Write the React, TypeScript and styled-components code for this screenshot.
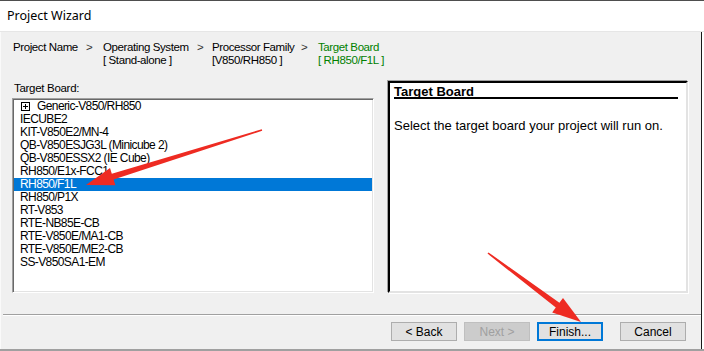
import React from "react";
import styled, { createGlobalStyle } from "styled-components";

const GlobalStyle = createGlobalStyle`
  html, body {
    margin: 0;
    padding: 0;
    background: #ffffff;
    overflow: hidden;
  }
  * {
    box-sizing: border-box;
  }
`;

const steps = [
  { name: "Project Name", value: "" },
  { name: "Operating System", value: "[ Stand-alone ]" },
  { name: "Processor Family", value: "[V850/RH850 ]" },
  { name: "Target Board", value: "[ RH850/F1L ]", current: true },
];

const boards = [
  { name: "Generic-V850/RH850", group: true },
  { name: "IECUBE2" },
  { name: "KIT-V850E2/MN-4" },
  { name: "QB-V850ESJG3L (Minicube 2)" },
  { name: "QB-V850ESSX2 (IE Cube)" },
  { name: "RH850/E1x-FCC1" },
  { name: "RH850/F1L", selected: true },
  { name: "RH850/P1X" },
  { name: "RT-V853" },
  { name: "RTE-NB85E-CB" },
  { name: "RTE-V850E/MA1-CB" },
  { name: "RTE-V850E/ME2-CB" },
  { name: "SS-V850SA1-EM" },
];

export default function App() {
  return (
    <>
      <GlobalStyle />
      <Frame>
        <TitleBar>Project Wizard</TitleBar>
        <Body>
          <Crumbs>
            {steps.map((s, i) => (
              <React.Fragment key={s.name}>
                {i > 0 && <Sep>&gt;</Sep>}
                <Step $current={s.current}>
                  <div>{s.name}</div>
                  <div>{s.value}</div>
                </Step>
              </React.Fragment>
            ))}
          </Crumbs>

          <Main>
            <LeftCol>
              <FieldLabel>Target Board:</FieldLabel>
              <ListBox>
                {boards.map((b) => (
                  <ListRow key={b.name} $selected={b.selected}>
                    {b.group && (
                      <Expander>
                        <svg width="9" height="9" viewBox="0 0 9 9">
                          <rect x="0.5" y="0.5" width="8" height="8" fill="#fff" stroke="#000" />
                          <path d="M2 4.5h5M4.5 2v5" stroke="#000" />
                        </svg>
                      </Expander>
                    )}
                    {b.name}
                  </ListRow>
                ))}
              </ListBox>
            </LeftCol>

            <InfoPanel>
              <InfoTitle>Target Board</InfoTitle>
              <InfoText>Select the target board your project will run on.</InfoText>
            </InfoPanel>
          </Main>

          <Divider />

          <ButtonRow>
            <Button>&lt; Back</Button>
            <Button disabled>Next &gt;</Button>
            <Button $default>Finish...</Button>
            <Button $gap>Cancel</Button>
          </ButtonRow>
        </Body>

        <Arrows width="704" height="351" viewBox="0 0 704 351">
          <polygon
            fill="#ee2b22"
            points="262.2,130.8 113.6,179.6 115.4,185.3 86,185 110,168.1 111.8,173.8 261.8,129.2"
          />
          <polygon
            fill="#ee2b22"
            points="487.5,253.6 555.8,307.6 552.2,312.4 581,322 563,298 559.4,302.8 488.5,252.4"
          />
        </Arrows>
      </Frame>
    </>
  );
}

const Frame = styled.div`
  position: relative;
  width: 704px;
  height: 351px;
  display: flex;
  flex-direction: column;
  font-family: "Liberation Sans", Arial, sans-serif;
  font-size: 11px;
  color: #000;
  border-bottom: 2px solid #a0a0a0;
`;

const TitleBar = styled.div`
  height: 32px;
  flex: none;
  display: flex;
  align-items: center;
  padding: 0 0 1px 7px;
  background: #ffffff;
  border-top: 1px solid #4e4e4e;
  border-bottom: 1px solid #e6e6e6;
  font-family: "Noto Sans", "Liberation Sans", sans-serif;
  font-size: 12.5px;
`;

const Body = styled.div`
  flex: 1;
  width: 702px;
  display: flex;
  flex-direction: column;
  background: #f0f0f0;
  border-left: 1px solid #fafafa;
  border-right: 1px solid #1a1a1a;
`;

const Crumbs = styled.div`
  display: grid;
  grid-template-columns: 73px 17px 94px 15px 89px 17px auto;
  padding: 9px 0 0 12px;
  font-size: 11.5px;
  line-height: 13px;
  letter-spacing: -0.4px;
`;

const Sep = styled.div`
  color: #333;
`;

const Step = styled.div<{ $current?: boolean }>`
  color: ${(p) => (p.$current ? "#008000" : "#000")};
  white-space: nowrap;
`;

const Main = styled.div`
  display: flex;
  gap: 14px;
  height: 212px;
  margin-top: 14px;
  padding-left: 11px;
`;

const LeftCol = styled.div`
  width: 362px;
  display: flex;
  flex-direction: column;
`;

const FieldLabel = styled.div`
  height: 17px;
  padding: 1px 0 0 2px;
  font-size: 11.5px;
  line-height: 13px;
  letter-spacing: -0.3px;
`;

const ListBox = styled.div`
  flex: 1;
  background: #fff;
  border: 1px solid;
  border-color: #a0a0a0 #ffffff #ffffff #a0a0a0;
  box-shadow: inset 1px 1px 0 #696969, inset -1px -1px 0 #e3e3e3;
  padding: 1px 1px 0 1px;
`;

const ListRow = styled.div<{ $selected?: boolean }>`
  height: 13px;
  line-height: 13px;
  display: flex;
  align-items: center;
  padding-left: 6px;
  white-space: nowrap;
  letter-spacing: -0.6px;
  font-size: 12px;
  background: ${(p) => (p.$selected ? "#0078d7" : "transparent")};
  color: ${(p) => (p.$selected ? "#fff" : "#000")};
`;

const Expander = styled.span`
  display: inline-flex;
  margin: 0 7px 0 0;
  padding-left: 1px;
`;

const InfoPanel = styled.div`
  width: 300px;
  background: #fff;
  border: 2px solid;
  border-color: #000 #e3e3e3 #e3e3e3 #000;
  box-shadow: -1px -1px 0 #a0a0a0, 1px 1px 0 #fff;
  padding: 1px 8px 0 4px;
`;

const InfoTitle = styled.div`
  font-weight: bold;
  font-size: 13px;
  line-height: 15px;
  border-bottom: 2px solid #000;
  height: 15px;
`;

const InfoText = styled.div`
  margin-top: 20px;
  font-size: 13px;
  line-height: 14px;
`;

const Divider = styled.div`
  margin-top: 21px;
  margin-left: 2px;
  height: 2px;
  border-top: 1px solid #a0a0a0;
  border-bottom: 1px solid #ffffff;
`;

const ButtonRow = styled.div`
  display: flex;
  justify-content: flex-end;
  gap: 7px;
  margin-top: 6px;
  padding-right: 15px;
`;

const Button = styled.button<{ $default?: boolean; $gap?: boolean }>`
  width: 66px;
  height: 19px;
  padding: 0;
  font-family: "Liberation Sans", Arial, sans-serif;
  font-size: 12px;
  color: #000;
  background: #e1e1e1;
  border: 1px solid #adadad;
  margin-left: ${(p) => (p.$gap ? "10px" : "0")};
  ${(p) =>
    p.$default &&
    `
    border: 2px solid #0078d7;
  `}
  &:disabled {
    color: #a0a0a0;
    background: #cccccc;
    border-color: #bfbfbf;
  }
`;

const Arrows = styled.svg`
  position: absolute;
  left: 0;
  top: 0;
  pointer-events: none;
`;
